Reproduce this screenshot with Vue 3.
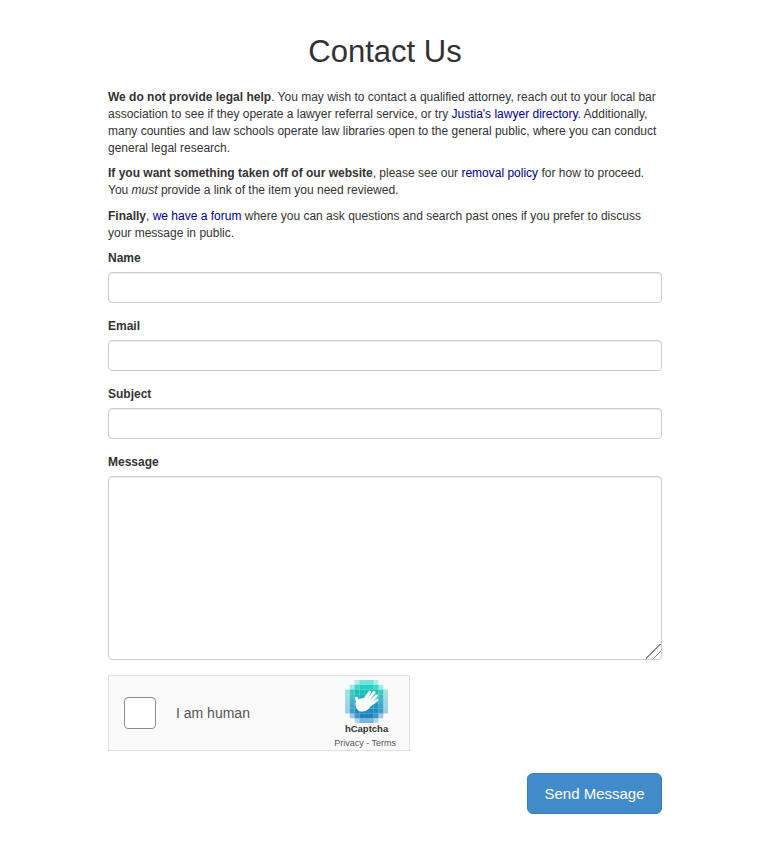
<template>
  <div class="page">
    <h1>Contact Us</h1>
    <p class="intro">
      <strong>We do not provide legal help</strong>. You may wish to contact a qualified attorney, reach out to your local bar
      association to see if they operate a lawyer referral service, or try <a href="#">Justia's lawyer directory</a>. Additionally,
      many counties and law schools operate law libraries open to the general public, where you can conduct
      general legal research.
    </p>
    <p class="removal">
      <strong>If you want something taken off of our website</strong>, please see our <a href="#">removal policy</a> for how to proceed.
      You <em>must</em> provide a link of the item you need reviewed.
    </p>
    <p>
      <strong>Finally</strong>, <a href="#">we have a forum</a> where you can ask questions and search past ones if you prefer to discuss
      your message in public.
    </p>
    <form @submit.prevent>
      <div v-for="f in fields" :key="f" class="field">
        <label>{{ f }}</label>
        <input type="text" />
      </div>
      <div class="field">
        <label>Message</label>
        <textarea></textarea>
      </div>
      <div class="captcha">
        <div class="check"></div>
        <span class="human">I am human</span>
        <div class="brand">
          <svg class="logo" viewBox="0 0 9 9" width="43" height="43">
            <rect
              v-for="c in cells"
              :key="c.x + '-' + c.y"
              :x="c.x"
              :y="c.y"
              width="1.01"
              height="1.01"
              :fill="c.fill"
              :fill-opacity="c.op"
            />
            <!-- hand: four fingers, thumb, palm -->
            <g stroke="#fff" stroke-linecap="round" fill="none">
              <path d="M3.9 4.4L5.2 2.5M4.5 4.5L6.1 2.6M4.9 4.9L6.6 3.3M5 5.4L6.7 4.2" stroke-width="0.6" />
              <path d="M2.8 5.2L2.4 3.8" stroke-width="0.62" />
            </g>
            <path d="M2.2 4.9C2.3 4.2 3.4 3.6 4.3 3.8 5.3 4 5.7 4.9 5.3 5.6 4.8 6.4 4 6.7 3.3 6.6 2.6 6.4 2.1 5.6 2.2 4.9Z" fill="#fff" />
          </svg>
          <div class="brand-name">hCaptcha</div>
          <div class="brand-links">Privacy - Terms</div>
        </div>
      </div>
      <div class="actions">
        <button type="submit">Send Message</button>
      </div>
    </form>
  </div>
</template>

<script setup>
const fields = ['Name', 'Email', 'Subject']

// logo is a 9x9 pixel grid, first/last cell of each row is the faded rim
const rows = [
  [2, 6, '#3fdccd'],
  [1, 7, '#1fcfc0'],
  [0, 8, '#19c2b9'],
  [0, 8, '#1fb4bb'],
  [0, 8, '#1ba7bd'],
  [0, 8, '#1a99bf'],
  [0, 8, '#1a8cc2'],
  [1, 7, '#1e80c2'],
  [2, 6, '#4a9ccf'],
]
const cells = []
rows.forEach(([from, to, fill], y) => {
  for (let x = from; x <= to; x++) {
    const edge = x === from || x === to
    const outer = y === 0 || y === 8
    let op = 1
    if (edge) op = 0.4
    else if (outer) op = 0.75
    else if (x === from + 1 || x === to - 1) op = 0.85
    cells.push({ x, y, fill, op })
  }
})
</script>

<style scoped>
.page {
  width: 554px;
  margin-left: 108px;
  padding-bottom: 28px;
  font-family: 'Liberation Sans', Arial, sans-serif;
  font-size: 12px;
  line-height: 17.14px;
  color: #333;
}
h1 {
  margin: 0;
  padding-top: 35px;
  height: 89px;
  box-sizing: border-box;
  font-size: 31px;
  font-weight: 400;
  line-height: 33px;
  text-align: center;
}
p {
  margin: 0 0 8px;
}
.intro {
  margin-bottom: 7px;
}
.removal {
  margin-bottom: 9px;
}
a {
  color: #00008b;
  text-decoration: none;
}
.field {
  margin-bottom: 15px;
}
label {
  display: block;
  height: 17px;
  margin-bottom: 5px;
  line-height: 17px;
  font-weight: 700;
}
input,
textarea {
  display: block;
  width: 100%;
  box-sizing: border-box;
  border: 1px solid #ccc;
  border-radius: 4px;
  background: #fff;
  box-shadow: inset 0 1px 1px rgba(0, 0, 0, 0.075);
  font: inherit;
}
input {
  height: 31px;
}
textarea {
  height: 184px;
  resize: vertical;
}
textarea::-webkit-resizer {
  background: linear-gradient(135deg, transparent 46%, #888 46%, #888 52%, transparent 52%, transparent 70%, #888 70%, #888 76%, transparent 76%);
}
.captcha {
  display: flex;
  align-items: center;
  width: 302px;
  height: 76px;
  box-sizing: border-box;
  margin-top: 15px;
  border: 1px solid #e0e0e0;
  background: #fafafa;
}
.check {
  width: 32px;
  height: 32px;
  box-sizing: border-box;
  margin-left: 15px;
  border: 1px solid #8a8a8a;
  border-radius: 4px;
  background: #fff;
}
.human {
  margin-left: 20px;
  font-size: 14px;
  color: #555;
}
.brand {
  display: flex;
  flex-direction: column;
  align-items: center;
  margin-left: auto;
  margin-right: 13px;
  padding-top: 4px;
}
.logo {
  display: block;
  margin-left: 3px;
}
.brand-name {
  margin-top: -1px;
  margin-left: 3px;
  font-size: 9.5px;
  font-weight: 700;
  line-height: 14px;
  color: #333;
}
.brand-links {
  font-size: 9px;
  line-height: 14px;
  color: #555;
}
.actions {
  display: flex;
  justify-content: flex-end;
  margin-top: 22px;
}
button {
  width: 135px;
  height: 41px;
  border: 1px solid #3a7ab8;
  border-radius: 6px;
  background: #428bca;
  color: #fff;
  font-family: inherit;
  font-size: 15px;
}
</style>
